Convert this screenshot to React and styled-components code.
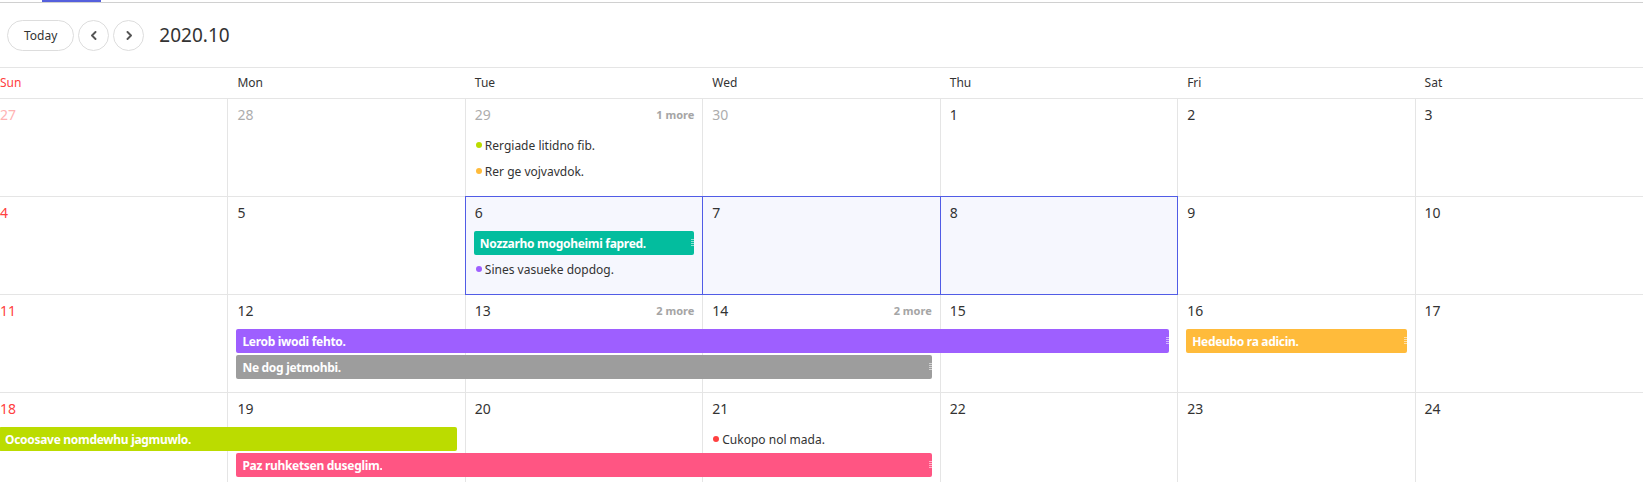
import styled, { createGlobalStyle } from "styled-components";

const GlobalStyle = createGlobalStyle`
  html, body {
    margin: 0;
    padding: 0;
    overflow: hidden;
    background: #fff;
  }
  body {
    font-family: "Noto Sans", "Open Sans", sans-serif;
    color: #333;
  }
`;

const DAY_NAMES = ["Sun", "Mon", "Tue", "Wed", "Thu", "Fri", "Sat"];

const WEEKS = [
  {
    days: [27, 28, 29, 30, 1, 2, 3],
    otherMonth: [0, 1, 2, 3],
    more: { 2: 1 },
    events: [
      { kind: "dot", col: 2, row: 0, color: "#bbdc00", title: "Rergiade litidno fib." },
      { kind: "dot", col: 2, row: 1, color: "#ffbb3b", title: "Rer ge vojvavdok." },
    ],
  },
  {
    days: [4, 5, 6, 7, 8, 9, 10],
    selected: [2, 3, 4],
    events: [
      { kind: "bar", col: 2, span: 1, row: 0, color: "#03bd9e", title: "Nozzarho mogoheimi fapred.", handle: true },
      { kind: "dot", col: 2, row: 1, color: "#9e5fff", title: "Sines vasueke dopdog." },
    ],
  },
  {
    days: [11, 12, 13, 14, 15, 16, 17],
    more: { 2: 2, 3: 2 },
    events: [
      { kind: "bar", col: 1, span: 4, row: 0, color: "#9e5fff", title: "Lerob iwodi fehto.", handle: true },
      { kind: "bar", col: 5, span: 1, row: 0, color: "#ffbb3b", title: "Hedeubo ra adicin.", handle: true },
      { kind: "bar", col: 1, span: 3, row: 1, color: "#9d9d9d", title: "Ne dog jetmohbi.", handle: true },
    ],
  },
  {
    days: [18, 19, 20, 21, 22, 23, 24],
    events: [
      { kind: "bar", col: 0, span: 2, row: 0, color: "#bbdc00", title: "Ocoosave nomdewhu jagmuwlo." },
      { kind: "dot", col: 3, row: 0, color: "#ff4040", title: "Cukopo nol mada." },
      { kind: "bar", col: 1, span: 3, row: 1, color: "#ff5583", title: "Paz ruhketsen duseglim.", handle: true },
    ],
  },
  {
    days: [25, 26, 27, 28, 29, 30, 31],
    events: [],
  },
];

function Chevron({ dir }) {
  const points = dir === "left" ? "5.5,1 2,4.5 5.5,8" : "2.5,1 6,4.5 2.5,8";
  return (
    <svg width="8" height="9" viewBox="0 0 8 9">
      <polyline points={points} fill="none" stroke="#555" strokeWidth="1.9" strokeLinecap="round" strokeLinejoin="round" />
    </svg>
  );
}

function dateColor(col, other) {
  if (col === 0) return other ? "#ffb3b3" : "#ff4040";
  return other ? "#adadad" : "#333";
}

export default function App() {
  return (
    <>
      <GlobalStyle />
      <Page>
        <TabStrip>
          <TabIndicator />
        </TabStrip>

        <Toolbar>
          <TodayButton>Today</TodayButton>
          <RoundButton aria-label="prev">
            <Chevron dir="left" />
          </RoundButton>
          <RoundButton aria-label="next">
            <Chevron dir="right" />
          </RoundButton>
          <RangeTitle>2020.10</RangeTitle>
        </Toolbar>

        <Viewport>
          <Calendar>
            <DayNames>
              {DAY_NAMES.map((d, i) => (
                <DayName key={d} $sunday={i === 0}>
                  {d}
                </DayName>
              ))}
            </DayNames>

            {WEEKS.map((week, w) => (
              <Week key={w}>
                {week.days.map((day, col) => {
                  const other = (week.otherMonth || []).includes(col);
                  const selected = (week.selected || []).includes(col);
                  const more = week.more && week.more[col];
                  return (
                    <Cell key={col} $col={col} $selected={selected}>
                      {selected && <SelectionFrame />}
                      <CellHeader>
                        <DateNum $color={dateColor(col, other)}>{day}</DateNum>
                        {more && <MoreLink>{more} more</MoreLink>}
                      </CellHeader>
                    </Cell>
                  );
                })}

                {week.events.map((ev, i) =>
                  ev.kind === "bar" ? (
                    <Bar
                      key={i}
                      $color={ev.color}
                      $col={ev.col}
                      $span={ev.span}
                      $row={ev.row}
                    >
                      <BarTitle>{ev.title}</BarTitle>
                      {ev.handle && <ResizeHandle />}
                    </Bar>
                  ) : (
                    <DotEvent key={i} $col={ev.col} $row={ev.row}>
                      <Dot $color={ev.color} />
                      <span>{ev.title}</span>
                    </DotEvent>
                  )
                )}
              </Week>
            ))}
          </Calendar>
        </Viewport>
      </Page>
    </>
  );
}

const Page = styled.div`
  display: flex;
  flex-direction: column;
  width: 100vw;
  height: 100vh;
  overflow: hidden;
`;

const TabStrip = styled.div`
  height: 2px;
  border-bottom: 1px solid #d0d0d0;
  padding-left: 42px;
  flex-shrink: 0;
`;

const TabIndicator = styled.div`
  width: 59px;
  height: 2px;
  background: #5560dd;
`;

const Toolbar = styled.div`
  height: 64px;
  display: flex;
  align-items: center;
  padding-left: 7px;
  flex-shrink: 0;
`;

const TodayButton = styled.button`
  height: 31px;
  padding: 0 16px;
  border: 1px solid #ddd;
  border-radius: 25px;
  background: #fff;
  color: #333;
  font-family: inherit;
  font-size: 12px;
  cursor: pointer;
  margin-right: 4px;
`;

const RoundButton = styled.button`
  width: 31px;
  height: 31px;
  border: 1px solid #ddd;
  border-radius: 50%;
  background: #fff;
  display: flex;
  align-items: center;
  justify-content: center;
  padding: 0;
  cursor: pointer;
  margin-right: 4px;
`;

const RangeTitle = styled.span`
  font-size: 19px;
  color: #333;
  margin-left: 11px;
`;

const Viewport = styled.div`
  flex: 1;
  overflow: hidden;
`;

const Calendar = styled.div`
  width: 1662px;
  margin-left: -10px;
`;

const DayNames = styled.div`
  display: grid;
  grid-template-columns: repeat(7, 1fr);
  height: 31px;
  border-top: 1px solid #e5e5e5;
  box-sizing: border-box;
`;

const DayName = styled.div`
  padding-left: 10px;
  font-size: 12px;
  line-height: 30px;
  color: ${(p) => (p.$sunday ? "#ff4040" : "#333")};
`;

const Week = styled.div`
  display: grid;
  grid-template-columns: repeat(7, 1fr);
  grid-template-rows: 32px 26px 26px 1fr;
  height: 98px;
  box-sizing: border-box;
  border-top: 1px solid #e5e5e5;
`;

const Cell = styled.div`
  grid-row: 1 / -1;
  grid-column: ${(p) => p.$col + 1};
  position: relative;
  border-left: 1px solid #e5e5e5;
  background: ${(p) => (p.$selected ? "#f6f7fe" : "#fff")};
  min-width: 0;
`;

const SelectionFrame = styled.div`
  position: absolute;
  top: -1px;
  left: -1px;
  right: -1px;
  bottom: -1px;
  border: 1px solid #515ce6;
  z-index: 3;
  pointer-events: none;
`;

const CellHeader = styled.div`
  display: flex;
  align-items: flex-start;
  justify-content: space-between;
  padding: 6px 8px 0 9px;
`;

const DateNum = styled.span`
  font-size: 14px;
  line-height: 19px;
  color: ${(p) => p.$color};
`;

const MoreLink = styled.span`
  font-size: 11px;
  font-weight: 700;
  line-height: 19px;
  color: #a5a5a5;
  cursor: pointer;
`;

const Bar = styled.div`
  grid-row: ${(p) => p.$row + 2};
  grid-column: ${(p) => `${p.$col + 1} / span ${p.$span}`};
  position: relative;
  z-index: 1;
  height: 24px;
  margin: 2px 8px 0 9px;
  padding: 0 6px;
  border-radius: 2px;
  background: ${(p) => p.$color};
  color: #fff;
  display: flex;
  align-items: center;
  min-width: 0;
`;

const BarTitle = styled.span`
  font-size: 12px;
  font-weight: 700;
  letter-spacing: -0.3px;
  white-space: nowrap;
  overflow: hidden;
`;

const ResizeHandle = styled.span`
  position: absolute;
  right: 0;
  top: 8px;
  width: 3px;
  height: 8px;
  background-image: repeating-linear-gradient(
    to bottom,
    rgba(255, 255, 255, 0.55) 0 1px,
    transparent 1px 2px
  );
`;

const DotEvent = styled.div`
  grid-row: ${(p) => p.$row + 2};
  grid-column: ${(p) => p.$col + 1};
  position: relative;
  z-index: 1;
  height: 24px;
  margin: 2px 8px 0 11px;
  display: flex;
  align-items: center;
  font-size: 12px;
  color: #333;
  white-space: nowrap;
  overflow: hidden;
`;

const Dot = styled.span`
  width: 6px;
  height: 6px;
  border-radius: 50%;
  background: ${(p) => p.$color};
  margin-right: 3px;
  flex-shrink: 0;
`;
